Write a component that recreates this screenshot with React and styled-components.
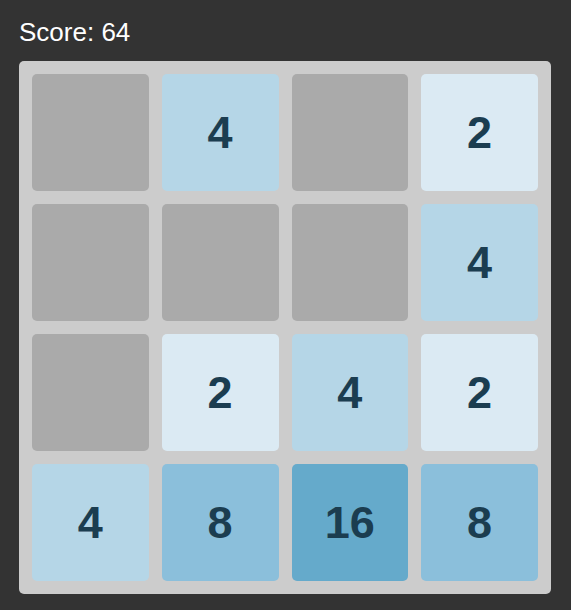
import React from 'react';
import styled, { createGlobalStyle } from 'styled-components';

const GlobalStyle = createGlobalStyle`
    html, body {
        margin: 0;
        padding: 0;
        background-color: #333;
    }
`

const tileColors = {
    0: '#aaaaaa',
    2: '#dbeaf3',
    4: '#b5d6e7',
    8: '#8bbfdb',
    16: '#65aacb',
}

const grid = [
    [0, 4, 0, 2],
    [0, 0, 0, 4],
    [0, 2, 4, 2],
    [4, 8, 16, 8],
]

const App = () => {
    const score = 64;
    return (
        <>
            <GlobalStyle/>
            <Page>
                <Score>Score: {score}</Score>
                <Board>
                    {grid.flat().map((value, i) => (
                        <Tile key={i} $value={value}>{value ? value : ''}</Tile>
                    ))}
                </Board>
            </Page>
        </>
    )
}

export default App

const Page = styled.div`
    padding : 16px 20px 16px 19px;
    font-family: "Liberation Sans", Arial, sans-serif;
`

const Score = styled.div`
    color: #fff;
    font-size: 26px;
    line-height: 32px;
    margin-bottom: 13px;
`

const Board = styled.div`
    width: 532px;
    height: 533px;
    box-sizing: border-box;
    background-color: #cccccc;
    border-radius: 5px;
    padding: 13px;
    display: grid;
    grid-template-columns: repeat(4, 1fr);
    grid-template-rows: repeat(4, 1fr);
    gap: 13px;
`

const Tile = styled.div`
    background-color: ${props => tileColors[props.$value] || '#4f93b8'};
    border-radius: 5px;
    display: flex;
    align-items: center;
    justify-content: center;
    color: #1b3d50;
    font-size: 45px;
    font-weight: bold;
`
